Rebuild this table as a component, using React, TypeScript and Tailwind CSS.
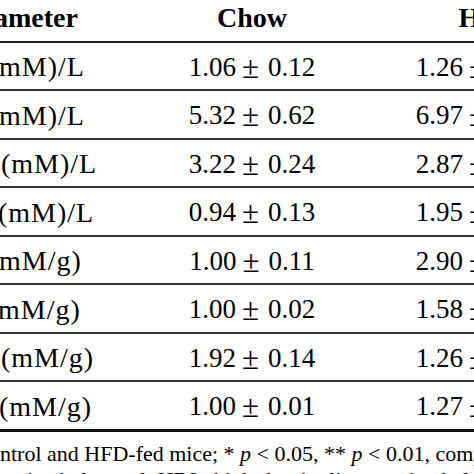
const font = { fontFamily: '"Liberation Serif", "Times New Roman", serif' };

interface Row {
  label: string;
  indent: string;
  chow: [string, string];
  hfd: [string, string];
}

const rows: Row[] = [
  { label: 'mM)/L', indent: 'ml-[-1px]', chow: ['1.06', '0.12'], hfd: ['1.26', '0.10'] },
  { label: 'mM)/L', indent: 'ml-[-1px]', chow: ['5.32', '0.62'], hfd: ['6.97', '0.45'] },
  { label: '(mM)/L', indent: 'ml-[1px]', chow: ['3.22', '0.24'], hfd: ['2.87', '0.21'] },
  { label: '(mM)/L', indent: 'ml-[-2px]', chow: ['0.94', '0.13'], hfd: ['1.95', '0.18'] },
  { label: 'mM/g)', indent: 'ml-[-1px]', chow: ['1.00', '0.11'], hfd: ['2.90', '0.27'] },
  { label: 'mM/g)', indent: 'ml-[-2px]', chow: ['1.00', '0.02'], hfd: ['1.58', '0.09'] },
  { label: '(mM/g)', indent: 'ml-[1px]', chow: ['1.92', '0.14'], hfd: ['1.26', '0.08'] },
  { label: '(mM/g)', indent: 'ml-[-1px]', chow: ['1.00', '0.01'], hfd: ['1.27', '0.06'] },
];

function Value({ v }: { v: [string, string] }) {
  return (
    <span className="flex items-center whitespace-nowrap">
      {v[0]}
      <span className="ml-[6px] mr-[9px] text-[31px] leading-none">±</span>
      {v[1]}
    </span>
  );
}

export default function App() {
  return (
    <div className="h-[474px] w-[474px] overflow-hidden bg-white text-black" style={font}>
      <div className="w-[640px]">
        <div className="grid h-[42.5px] grid-cols-[160px_184px_270px] items-center border-b-2 border-[#222] pb-[4px] text-[28px] font-bold leading-none">
          <span className="ml-[-6px] whitespace-nowrap">ameter</span>
          <span className="text-center">Chow</span>
          <span className="pl-[18px] text-center">HFD</span>
        </div>
        {rows.map((r, i) => (
          <div
            key={i}
            className={
              i === rows.length - 1
                ? 'grid h-[49.5px] grid-cols-[160px_184px_270px] items-center border-b-[3px] border-[#111] pt-[3px] text-[27px] leading-none'
                : 'grid h-[48.5px] grid-cols-[160px_184px_270px] items-center border-b-2 border-[#333] pt-[3px] text-[27px] leading-none'
            }
          >
            <span className={`${r.indent} whitespace-nowrap text-[28px] tracking-[1px]`}>{r.label}</span>
            <span className="flex justify-center">
              <Value v={r.chow} />
            </span>
            <span className="flex justify-center">
              <Value v={r.hfd} />
            </span>
          </div>
        ))}
        <div className="whitespace-nowrap pt-[9px] text-[22px] leading-[26px]">
          <p>
            ntrol and HFD-fed mice; * <i>p</i> &lt; 0.05, ** <i>p</i> &lt; 0.01, compared with control mice.
          </p>
          <p>otein cholesterol; HDL, high-density lipoprotein cholesterol.</p>
        </div>
      </div>
    </div>
  );
}
